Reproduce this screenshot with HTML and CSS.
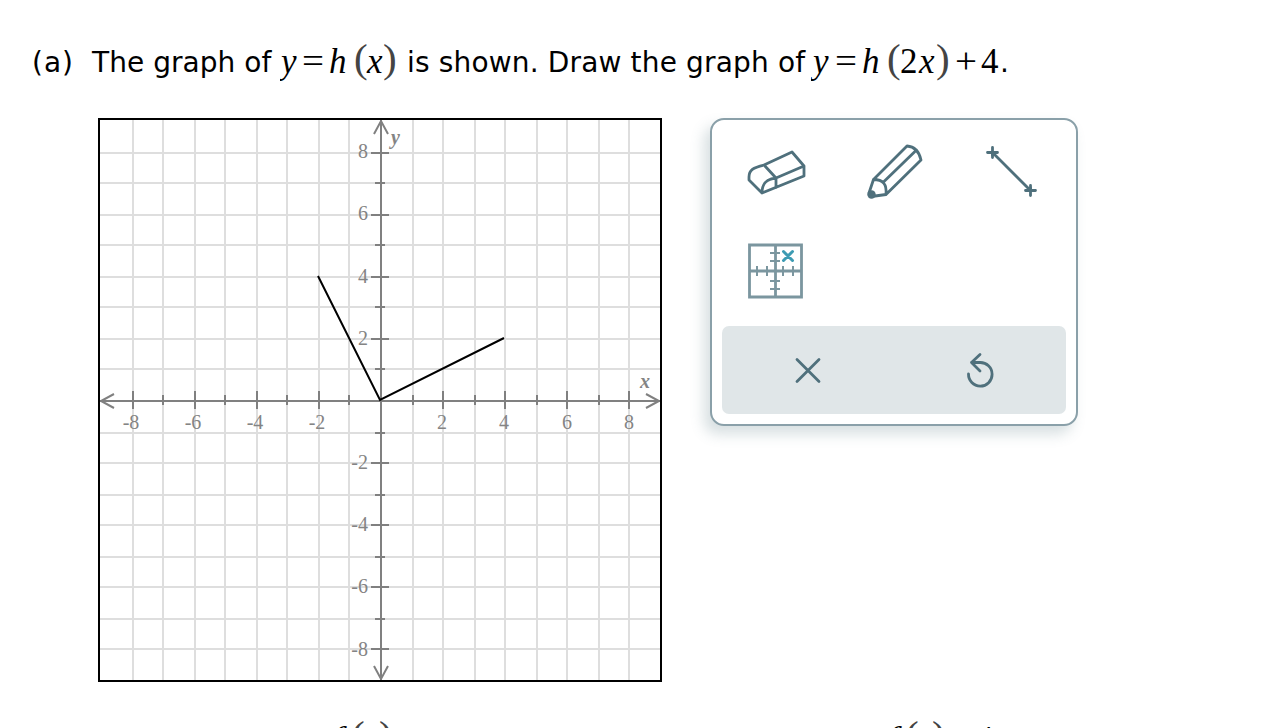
FILE: index.html
```html
<!DOCTYPE html>
<html lang="en">
<head>
  <meta charset="UTF-8">
  <meta name="viewport" content="width=device-width, initial-scale=1.0">
  <title>Graph Transformations</title>
  <link rel="stylesheet" href="styles.css">
</head>
<body>

<div class="question">
  <span class="part">(a)</span>
  <span class="words words-1">The graph of</span>
  <svg class="math" width="128" height="64">
    <text class="var" x="1" y="42">y</text>
    <text class="num" x="22" y="42" textLength="22" lengthAdjust="spacingAndGlyphs">=</text>
    <text class="var" x="49" y="42">h</text>
    <text class="paren" x="74" y="41">(</text>
    <text class="var" x="87" y="42">x</text>
    <text class="paren" x="103" y="41">)</text>
  </svg>
  <span class="words words-2">is shown. Draw the graph of</span>
  <svg class="math" width="189" height="64">
    <text class="var" x="2" y="42">y</text>
    <text class="num" x="24" y="42" textLength="22" lengthAdjust="spacingAndGlyphs">=</text>
    <text class="var" x="51" y="42">h</text>
    <text class="paren" x="76" y="41">(</text>
    <text class="num" x="89" y="42">2</text>
    <text class="var" x="108" y="42">x</text>
    <text class="paren" x="125" y="41">)</text>
    <text class="num" x="144" y="42" textLength="22" lengthAdjust="spacingAndGlyphs">+</text>
    <text class="num" x="170" y="42">4</text>
  </svg>
  <span class="words">.</span>
</div>

<div class="workspace">
  <svg class="graph" width="564" height="564" viewBox="0 0 564 564">
    <!-- grid -->
    <path class="grid" d="M35 0V564M65 0V564M97 0V564M127 0V564M159 0V564M189 0V564M221 0V564M251 0V564M315 0V564M345 0V564M377 0V564M407 0V564M439 0V564M469 0V564M501 0V564M531 0V564"/>
    <path class="grid" d="M0 35H564M0 65H564M0 97H564M0 127H564M0 159H564M0 189H564M0 221H564M0 251H564M0 315H564M0 345H564M0 377H564M0 407H564M0 439H564M0 469H564M0 501H564M0 531H564"/>
    <!-- axes and ticks -->
    <path class="axis" d="M2 283H562M283 2V562"/>
    <path class="axis" d="M35 273V291M97 273V291M159 273V291M221 273V291M345 273V291M407 273V291M469 273V291M531 273V291"/>
    <path class="axis" d="M65 277V287M127 277V287M189 277V287M251 277V287M315 277V287M377 277V287M439 277V287M501 277V287"/>
    <path class="axis" d="M273 35H291M273 97H291M273 159H291M273 221H291M273 345H291M273 407H291M273 469H291M273 531H291"/>
    <path class="axis" d="M277 65H287M277 127H287M277 189H287M277 251H287M277 315H287M277 377H287M277 439H287M277 501H287"/>
    <path class="arrow" d="M16 276L3 283L16 290M548 276L561 283L548 290M276 16L283 3L290 16M276 548L283 561L290 548"/>
    <!-- labels -->
    <g class="label mid">
      <text x="33" y="311">-8</text>
      <text x="95" y="311">-6</text>
      <text x="157" y="311">-4</text>
      <text x="219" y="311">-2</text>
      <text x="344" y="311">2</text>
      <text x="406" y="311">4</text>
      <text x="469" y="311">6</text>
      <text x="531" y="311">8</text>
    </g>
    <g class="label end">
      <text x="270" y="40">8</text>
      <text x="270" y="102">6</text>
      <text x="270" y="165">4</text>
      <text x="270" y="227">2</text>
      <text x="270" y="351">-2</text>
      <text x="270" y="413">-4</text>
      <text x="270" y="475">-6</text>
      <text x="270" y="538">-8</text>
    </g>
    <text class="axis-name" x="293" y="26">y</text>
    <text class="axis-name" x="542" y="270">x</text>
    <polyline class="curve" points="220,158 282,282 406,220"/>
    <rect class="frame" x="1" y="1" width="562" height="562"/>
  </svg>

  <div class="panel">
    <div class="tools">
      <svg class="icon" width="60" height="60">
        <path d="M18 24L46 11L58 25V35L16 52L3 39V36C3 29 7 26.500 18 24L30 37L58 25M30 37V46.500M30 37C21 38 16 42 16 52"/>
      </svg>
      <svg class="icon" width="60" height="60">
        <path d="M9.500 38.500L43 5C50 5.500 55 10 57 19L22 53.500L7.500 55.500L5 52ZM9.500 38.500C19 38.500 23 43 22 53.500M19.500 41L52.500 9"/>
        <circle class="tip" cx="7.500" cy="53.500" r="4.200"/>
      </svg>
      <svg class="icon" width="60" height="60">
        <path d="M10.500 11.500L48.500 49.500M5.500 11.500H15.500M10.500 6.500V16.500M43.500 49.500H53.500M48.500 44.500V54.500"/>
        <path d="M10.500 14V11.500H13ZM46 49.500L48.500 47V49.500Z"/>
      </svg>
      <svg class="icon plot" width="60" height="60">
        <path class="plot-frame" d="M3.500 5H55.500V57H3.500ZM29.500 5V57M3.500 31H55.500"/>
        <path class="plot-ticks" d="M24 13H34M24 21H34M24 41H34M24 49H34M11 26V36M21 26V36M37 26V36M47 26V36"/>
        <path class="plot-point" d="M37.500 11.500L46.500 20.500M46.500 11.500L37.500 20.500"/>
      </svg>
    </div>
    <div class="actions">
      <svg class="icon" width="40" height="40">
        <path d="M9 9.500L31 31.500M31 9.500L9 31.500"/>
      </svg>
      <svg class="icon" width="40" height="40">
        <path d="M8.500 24A11.800 11.800 0 1 0 20 12.500H11.500M20 4.500L11.500 12.500L20 21"/>
      </svg>
    </div>
  </div>
</div>

<div class="next">
  <svg class="math" width="560" height="18">
    <text class="var" x="49" y="41">f</text>
    <text class="paren" x="67" y="39">(</text>
    <text class="var" x="81" y="42">x</text>
    <text class="paren" x="95" y="39">)</text>
  </svg>
  <svg class="math" width="200" height="18">
    <text class="var" x="44" y="41">f</text>
    <text class="paren" x="61" y="39">(</text>
    <text class="var" x="74" y="42">x</text>
    <text class="paren" x="88" y="39">)</text>
    <text class="num" x="108" y="42">+</text>
    <text class="num" x="132" y="41">4</text>
  </svg>
</div>

</body>
</html>
```

FILE: styles.css
```css
body {
  margin: 0;
  height: 728px;
  overflow: hidden;
  background: #fff;
  color: #000;
}
.question {
  display: flex;
  height: 64px;
  padding: 31px 0 0 32px;
  font-family: Verdana, "DejaVu Sans", sans-serif;
  font-size: 28px;
  line-height: 64px;
  white-space: nowrap;
}
.part {
  width: 60px;
  letter-spacing: 1px;
}
.words-1 {
  width: 188px;
  letter-spacing: 0.05px;
}
.words-2 {
  width: 403px;
  letter-spacing: 0.16px;
  text-indent: -1px;
}
.math {
  flex: none;
  font-family: "Liberation Serif", "Times New Roman", serif;
  font-size: 35px;
}
.var {
  font-style: italic;
}
.paren {
  font-size: 41px;
  fill: #444;
}
.workspace {
  display: flex;
  align-items: flex-start;
  gap: 48px;
  padding: 23px 0 0 98px;
}
.graph {
  display: block;
  flex: none;
}
.grid {
  stroke: #dedede;
  stroke-width: 2;
}
.axis {
  stroke: #808080;
  stroke-width: 2;
}
.arrow {
  fill: none;
  stroke: #808080;
  stroke-width: 2;
}
.label {
  font-family: "Liberation Serif", "Times New Roman", serif;
  font-size: 20px;
  fill: #848484;
}
.mid {
  text-anchor: middle;
}
.end {
  text-anchor: end;
}
.axis-name {
  font-family: "Liberation Serif", "Times New Roman", serif;
  font-size: 20px;
  font-style: italic;
  font-weight: bold;
  fill: #848484;
}
.curve {
  fill: none;
  stroke: #000;
  stroke-width: 2;
}
.frame {
  fill: none;
  stroke: #000;
  stroke-width: 2;
}
.panel {
  box-sizing: border-box;
  width: 368px;
  height: 308px;
  padding: 2px 10px 10px;
  border: 2px solid #8aa0a9;
  border-radius: 14px;
  background: #fff;
  box-shadow: -6px 8px 14px rgba(75, 110, 120, 0.22);
}
.tools {
  display: grid;
  grid-template-columns: repeat(3, 118px);
  grid-template-rows: 98px 98px;
  row-gap: 1px;
  place-items: center;
  margin: 0 -5px 7px;
}
.icon {
  display: block;
  fill: none;
  stroke: #4f707c;
  stroke-width: 2.8;
  stroke-linecap: round;
  stroke-linejoin: round;
}
.tip {
  fill: #4f707c;
  stroke: none;
}
.plot {
  stroke-linecap: butt;
  stroke-linejoin: miter;
}
.plot-frame {
  stroke: #7b969f;
  stroke-width: 2.8;
}
.plot-ticks {
  stroke: #7b969f;
  stroke-width: 2;
}
.plot-point {
  stroke: #3d9bb3;
  stroke-width: 3;
  stroke-linecap: round;
}
.actions {
  display: grid;
  grid-template-columns: 1fr 1fr;
  place-items: center;
  height: 88px;
  border-radius: 7px;
  background: #e0e6e8;
}
.next {
  display: flex;
  height: 18px;
  padding: 28px 0 0 284px;
}
```
